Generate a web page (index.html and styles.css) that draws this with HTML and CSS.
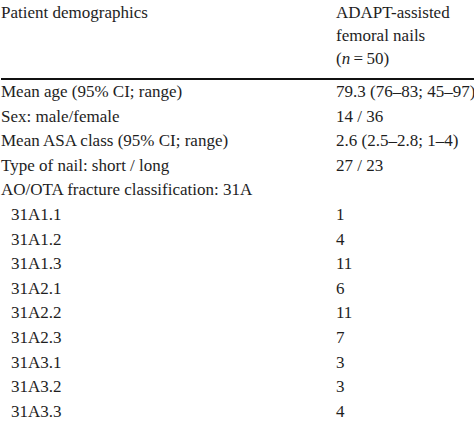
FILE: index.html
```html
<!DOCTYPE html>
<html>
<head>
<meta charset="utf-8">
<link rel="stylesheet" href="styles.css">
</head>
<body>
<div class="table">
  <div class="head">
    <div class="hcell left">Patient demographics</div>
    <div class="hcell right">ADAPT-assisted<br>femoral nails<br>(<i>n</i>&#8201;=&#8201;50)</div>
  </div>
  <div class="rows">
    <div class="c">Mean age (95% CI; range)</div><div class="v">79.3 (76–83; 45–97)</div>
    <div class="c">Sex: male/female</div><div class="v">14 / 36</div>
    <div class="c">Mean ASA class (95% CI; range)</div><div class="v">2.6 (2.5–2.8; 1–4)</div>
    <div class="c">Type of nail: short / long</div><div class="v">27 / 23</div>
    <div class="c">AO/OTA fracture classification: 31A</div><div class="v"></div>
    <div class="c sub">31A1.1</div><div class="v">1</div>
    <div class="c sub">31A1.2</div><div class="v">4</div>
    <div class="c sub">31A1.3</div><div class="v">11</div>
    <div class="c sub">31A2.1</div><div class="v">6</div>
    <div class="c sub">31A2.2</div><div class="v">11</div>
    <div class="c sub">31A2.3</div><div class="v">7</div>
    <div class="c sub">31A3.1</div><div class="v">3</div>
    <div class="c sub">31A3.2</div><div class="v">3</div>
    <div class="c sub">31A3.3</div><div class="v">4</div>
  </div>
</div>
</body>
</html>
```
FILE: styles.css
```css
html, body {
  margin: 0;
  padding: 0;
  background: #fff;
}
body {
  font-family: "Liberation Serif", "Times New Roman", serif;
  font-size: 17px;
  color: #1e1e1e;
  width: 474px;
  height: 426px;
  overflow: hidden;
}
.table {
  padding-left: 1px;
}
.head {
  display: grid;
  grid-template-columns: 335px 1fr;
  line-height: 23px;
  padding-top: 1px;
  padding-bottom: 8px;
  border-bottom: 2px solid #111;
}
.rows {
  display: grid;
  grid-template-columns: 335px 1fr;
  grid-auto-rows: 24.6px;
  line-height: 24.6px;
}
.c, .v, .hcell {
  white-space: nowrap;
}
.sub {
  padding-left: 10px;
}
```
